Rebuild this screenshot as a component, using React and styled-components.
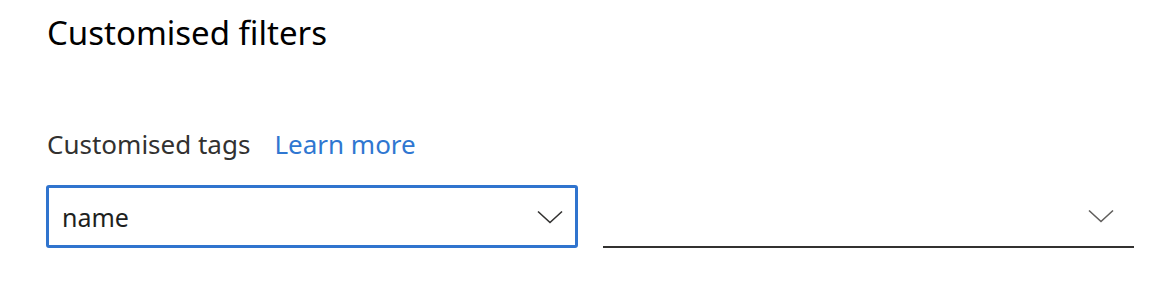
import styled, { createGlobalStyle } from "styled-components"

const Global = createGlobalStyle`
  body {
    margin: 0;
    background: #fff;
    font-family: "Noto Sans", "Open Sans", sans-serif;
  }
`

const Wrapper = styled.div`
  display: flex;
  flex-direction: column;
  padding: 12px 34px 0 46px;
`

const Title = styled.h2`
  margin: 0 0 0 1px;
  font-size: 33px;
  font-weight: 400;
  line-height: 42px;
  color: #000;
`

const LabelRow = styled.div`
  display: flex;
  align-items: baseline;
  gap: 24px;
  margin: 74px 0 0 1px;
  font-size: 26px;
  line-height: 32px;
`

const Label = styled.span`
  color: #323130;
`

const Link = styled.a`
  color: #2f77d1;
  text-decoration: none;
`

const Row = styled.div`
  display: grid;
  grid-template-columns: 1fr 1fr;
  gap: 25px;
  margin-top: 25px;
`

const Select = styled.div`
  height: 63px;
  box-sizing: border-box;
  display: flex;
  align-items: center;
  justify-content: space-between;
  padding: ${(p) => (p.$focused ? "0 12px 0 13px" : "0 20px 0 16px")};
  border: ${(p) => (p.$focused ? "3px solid #3074ce" : "none")};
  border-bottom: ${(p) => (p.$focused ? "3px solid #3074ce" : "2px solid #323130")};
  border-radius: ${(p) => (p.$focused ? "3px" : "0")};
  font-size: 25px;
  color: #201f1e;
`

const Value = styled.span`
  line-height: 30px;
`

const Chevron = ({ color }) => (
  <svg width="26" height="14" viewBox="0 0 26 14" fill="none">
    <path d="M1 1.5 L13 12.5 L25 1.5" stroke={color} strokeWidth="1.6" />
  </svg>
)

const App = () => {
  return (
    <Wrapper>
      <Global />
      <Title>Customised filters</Title>
      <LabelRow>
        <Label>Customised tags</Label>
        <Link href="#">Learn more</Link>
      </LabelRow>
      <Row>
        <Select $focused>
          <Value>name</Value>
          <Chevron color="#323130" />
        </Select>
        <Select>
          <Value></Value>
          <Chevron color="#605e5c" />
        </Select>
      </Row>
    </Wrapper>
  )
}

export default App
